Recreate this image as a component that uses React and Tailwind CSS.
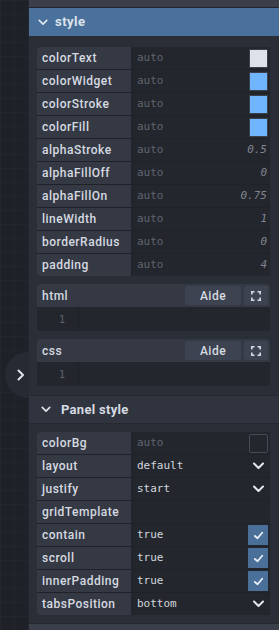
import React from 'react';

const mono = { fontFamily: '"DejaVu Sans Mono", "Liberation Mono", monospace' };

const Chevron = ({ className = '' }) => (
  <svg viewBox="0 0 12 8" className={className} fill="none" stroke="currentColor" strokeWidth="2" strokeLinecap="round" strokeLinejoin="round">
    <path d="M1.5 1.5 L6 6 L10.5 1.5" />
  </svg>
);

const Check = () => (
  <svg viewBox="0 0 12 12" className="w-[11px] h-[11px]" fill="none" stroke="#e8eef6" strokeWidth="2" strokeLinecap="round" strokeLinejoin="round">
    <path d="M2 6.5 L5 9 L10 3" />
  </svg>
);

const FullscreenIcon = () => (
  <svg viewBox="0 0 10 10" className="w-[10px] h-[10px]" fill="none" stroke="#d5dae2" strokeWidth="1.6">
    <path d="M0.8 3.5 V0.8 H3.5 M6.5 0.8 H9.2 V3.5 M9.2 6.5 V9.2 H6.5 M3.5 9.2 H0.8 V6.5" />
  </svg>
);

const styleRows = [
  { name: 'colorText', swatch: '#dde2ea' },
  { name: 'colorWidget', swatch: '#6fb5ff' },
  { name: 'colorStroke', swatch: '#6fb5ff' },
  { name: 'colorFill', swatch: '#6fb5ff' },
  { name: 'alphaStroke', num: '0.5' },
  { name: 'alphaFillOff', num: '0' },
  { name: 'alphaFillOn', num: '0.75' },
  { name: 'lineWidth', num: '1' },
  { name: 'borderRadius', num: '0' },
  { name: 'padding', num: '4' },
];

const panelRows = [
  { name: 'colorBg', swatch: 'empty' },
  { name: 'layout', value: 'default', select: true },
  { name: 'justify', value: 'start', select: true },
  { name: 'gridTemplate', value: '' },
  { name: 'contain', value: 'true', check: true },
  { name: 'scroll', value: 'true', check: true },
  { name: 'innerPadding', value: 'true', check: true },
  { name: 'tabsPosition', value: 'bottom', select: true },
];

const Row = ({ r }) => (
  <div className="grid grid-cols-[94px_1fr] gap-px h-[22px]">
    <div className="bg-[#343944] text-[#d6dae1] text-[12px] font-medium tracking-[0.5px] pl-[5px] flex items-center">
      {r.name}
    </div>
    <div className="bg-[#23262d] flex items-center pl-[5px] pr-[2px]" style={mono}>
      {r.value === undefined ? (
        <span className="text-[11px] text-[#5f646d]">auto</span>
      ) : (
        <span className="text-[11px] text-[#d3d7de]">{r.value}</span>
      )}
      <div className="flex-1" />
      {r.swatch && r.swatch !== 'empty' && (
        <div className="w-[19px] h-[19px] border border-[#3b404b]" style={{ background: r.swatch }} />
      )}
      {r.swatch === 'empty' && (
        <div className="w-[19px] h-[19px] border border-[#454a55] rounded-[2px]" />
      )}
      {r.num && (
        <span className="text-[11px] italic text-[#80858e] pr-[1px]">{r.num}</span>
      )}
      {r.check && (
        <div className="w-[20px] h-[20px] bg-[#4a709a] flex items-center justify-center">
          <Check />
        </div>
      )}
      {r.select && <Chevron className="w-[13px] h-[8px] text-[#e3e7ed] mr-[3px]" />}
    </div>
  </div>
);

const CodeBlock = ({ title }) => (
  <div className="rounded-[3px] overflow-hidden bg-[#23262d] flex flex-col">
    <div className="h-[23px] bg-[#343944] flex items-center pl-[5px] pr-[2px] gap-[3px]">
      <span className="text-[12px] font-medium tracking-[0.5px] text-[#d6dae1]">{title}</span>
      <div className="flex-1" />
      <div className="w-[56px] h-[19px] bg-[#3d4350] rounded-[2px] flex items-center justify-center text-[12px] font-medium tracking-[0.5px] text-[#d6dae1]">
        Aide
      </div>
      <div className="w-[24px] h-[19px] bg-[#3d4350] rounded-[2px] flex items-center justify-center">
        <FullscreenIcon />
      </div>
    </div>
    <div className="h-[24px] flex">
      <div className="w-[42px] border-r border-[#1d2026] flex items-center justify-end pr-[13px] text-[10px] text-[#5f646d]" style={mono}>
        1
      </div>
    </div>
  </div>
);

export default function App() {
  return (
    <div className="w-[279px] h-[630px] overflow-hidden relative flex bg-[#1e2128] bg-[linear-gradient(#23262d_1px,transparent_1px),linear-gradient(90deg,#23262d_1px,transparent_1px)] bg-[size:14px_14px]" style={{ fontFamily: 'Roboto, "Noto Sans", sans-serif' }}>
      <div className="w-[29px] shrink-0 relative">
        <div className="absolute left-[5px] top-[352px] w-[46px] h-[46px] rounded-full bg-[#262a32] flex items-center pl-[12px]">
          <svg viewBox="0 0 8 12" className="w-[8px] h-[12px]" fill="none" stroke="#dfe3ea" strokeWidth="2" strokeLinecap="round" strokeLinejoin="round">
            <path d="M1.5 1.5 L6 6 L1.5 10.5" />
          </svg>
        </div>
      </div>

      <div className="relative z-10 flex-1 flex flex-col bg-[#2a2e36]">
        <div className="h-[8px] bg-[#3a3f4a] border-b border-[#23262d] shrink-0" />
        <div className="h-[28px] bg-[#4a719b] flex items-center pl-[9px] gap-[7px] shrink-0">
          <Chevron className="w-[10px] h-[7px] text-[#dfe6ee]" />
          <span className="text-[13px] font-bold tracking-[0.5px] text-[#dde4ec]">style</span>
        </div>

        <div className="pl-[8px] pr-[9px] pt-[11px] pb-[9px] flex flex-col gap-[8px]">
          <div className="rounded-[3px] overflow-hidden bg-[#1f2228] flex flex-col gap-px">
            {styleRows.map((r) => <Row key={r.name} r={r} />)}
          </div>
          <CodeBlock title="html" />
          <CodeBlock title="css" />
        </div>

        <div className="h-[29px] bg-[#30343e] border-y border-[#25282f] flex items-center pl-[12px] gap-[10px] shrink-0">
          <Chevron className="w-[10px] h-[7px] text-[#dfe3ea]" />
          <span className="text-[13px] font-bold tracking-[0.3px] text-[#d6dbe2]">Panel style</span>
        </div>

        <div className="pl-[8px] pr-[9px] pt-[8px] pb-[8px]">
          <div className="rounded-[3px] overflow-hidden bg-[#1f2228] flex flex-col gap-px">
            {panelRows.map((r) => <Row key={r.name} r={r} />)}
          </div>
        </div>

        <div className="flex-1 bg-[#3a3f4a] border-t border-[#25282f]" />
      </div>
    </div>
  );
}
